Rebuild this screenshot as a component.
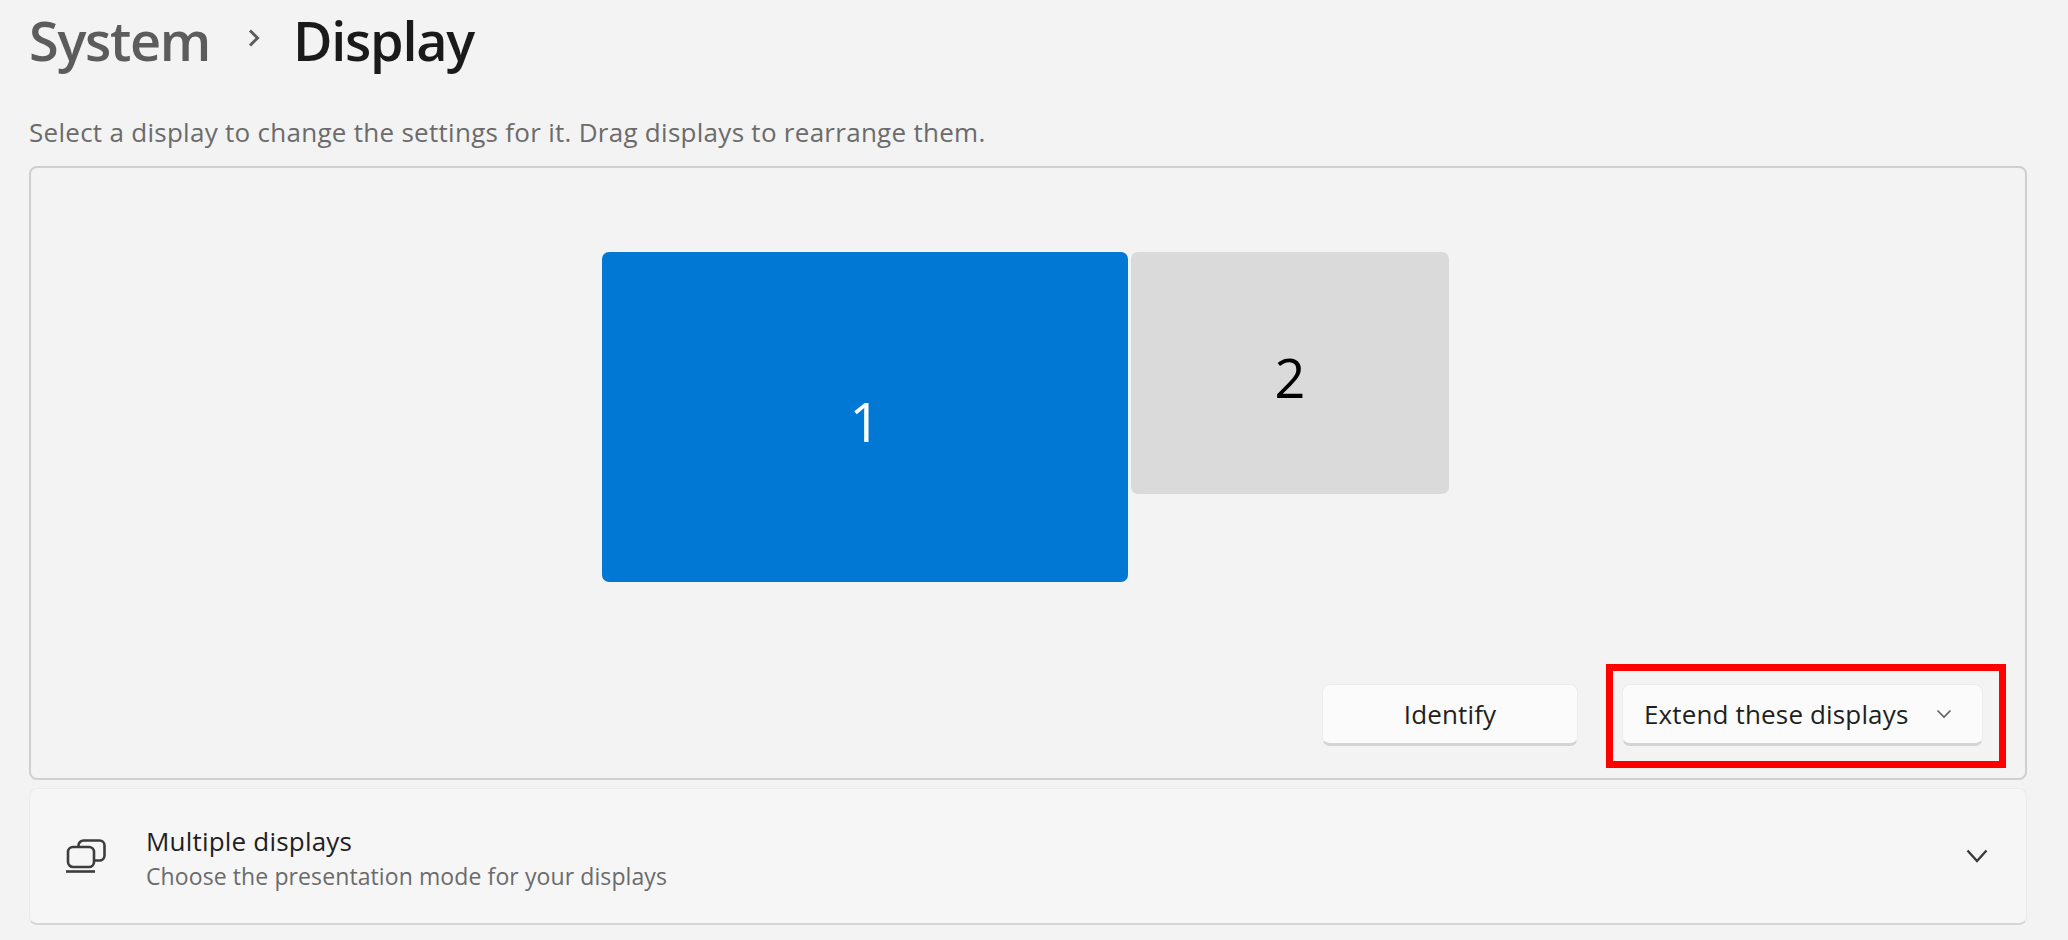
<div class="page">
  <header class="crumbs">
    <span class="parent">System</span>
    <svg class="sep" width="14" height="18" viewBox="0 0 14 18"><path d="M3 1.5 10.5 9 3 16.5" /></svg>
    <span class="current">Display</span>
  </header>
  <p class="hint">Select a display to change the settings for it. Drag displays to rearrange them.</p>
  <section class="panel">
    <div class="monitors">
      <div class="monitor primary">1</div>
      <div class="monitor secondary">2</div>
    </div>
    <div class="actions">
      <button class="btn identify">Identify</button>
      <div class="highlighted">
        <button class="btn mode">
          <span>Extend these displays</span>
          <svg width="16" height="10" viewBox="0 0 16 10"><path d="M1.5 1.5 8 8l6.5-6.5" /></svg>
        </button>
        <div class="frame"></div>
      </div>
    </div>
  </section>
  <section class="row">
    <svg class="icon" width="40" height="34" viewBox="0 0 40 34">
      <rect x="12.5" y="1.5" width="26" height="20" rx="5" />
      <rect x="2" y="8" width="26" height="20" rx="5" fill="#f6f6f6" />
      <path class="base" d="M0 32.5h29" />
    </svg>
    <div class="labels">
      <div class="title">Multiple displays</div>
      <div class="desc">Choose the presentation mode for your displays</div>
    </div>
    <svg class="expand" width="22" height="14" viewBox="0 0 22 14"><path d="M1.5 1.5 11 12l9.5-10.5" /></svg>
  </section>
</div>

<style>
  :global(body) {
    margin: 0;
    background: #f3f3f3;
  }
  .page {
    box-sizing: border-box;
    width: 2068px;
    height: 940px;
    padding: 0 41px 0 29px;
    font-family: "Open Sans", "Noto Sans", sans-serif;
    overflow: hidden;
  }
  .crumbs {
    display: flex;
    align-items: center;
    height: 80px;
    font-size: 54px;
    line-height: 80px;
    letter-spacing: -1.3px;
    font-weight: 600;
  }
  .parent { color: #5c5c5c; }
  .current { color: #1a1a1a; }
  .sep {
    margin: 0 32px 4px 37px;
    fill: none;
    stroke: #5c5c5c;
    stroke-width: 3;
  }
  .hint {
    margin: 37px 0 0;
    height: 49px;
    line-height: 30px;
    font-size: 26px;
    letter-spacing: 0.28px;
    color: #6b6b6b;
  }
  .panel {
    box-sizing: border-box;
    height: 614px;
    display: flex;
    flex-direction: column;
    background: #f3f3f3;
    border: 2px solid #cfcfcf;
    border-radius: 8px;
    padding: 84px 42px 32px 0;
  }
  .monitors {
    display: flex;
    gap: 3px;
    align-items: flex-start;
    margin-left: 571px;
  }
  .monitor {
    display: flex;
    align-items: center;
    justify-content: center;
    border-radius: 7px;
    font-size: 54px;
    box-sizing: border-box;
    padding-top: 8px;
  }
  .primary {
    width: 526px;
    height: 330px;
    background: #0078d4;
    color: #fff;
  }
  .secondary {
    width: 318px;
    height: 242px;
    background: #dadada;
    color: #000;
  }
  .actions {
    margin-top: auto;
    display: flex;
    justify-content: flex-end;
    gap: 44px;
  }
  .btn {
    box-sizing: border-box;
    height: 62px;
    display: flex;
    align-items: center;
    background: #fbfbfb;
    border: 1px solid #ececec;
    border-bottom: 3px solid #d4d4d4;
    border-radius: 8px;
    font: inherit;
    font-weight: 400;
    font-size: 26px;
    letter-spacing: 0.15px;
    color: #1f1f1f;
    padding: 0;
  }
  .identify {
    width: 256px;
    justify-content: center;
  }
  .mode {
    width: 361px;
    padding: 0 30px 0 21px;
    justify-content: space-between;
  }
  .mode svg {
    fill: none;
    stroke: #606060;
    stroke-width: 1.6;
  }
  .highlighted {
    position: relative;
  }
  .frame {
    position: absolute;
    box-sizing: border-box;
    left: -16px;
    right: -23px;
    top: -20px;
    bottom: -22px;
    border: 7px solid #ff0000;
    pointer-events: none;
  }
  .row {
    box-sizing: border-box;
    margin-top: 8px;
    height: 137px;
    display: flex;
    align-items: center;
    background: #f6f6f6;
    border: 1px solid #ebebeb;
    border-bottom: 2px solid #d6d6d6;
    border-radius: 8px;
    padding: 0 38px 0 36px;
  }
  .icon {
    flex: none;
    fill: none;
    stroke: #3d3d3d;
    stroke-width: 2.6;
    margin-right: 40px;
  }
  .labels {
    flex: 1;
    display: flex;
    flex-direction: column;
    gap: 2px;
    padding-top: 3px;
  }
  .title {
    font-size: 26px;
    line-height: 34px;
    letter-spacing: 0.2px;
    color: #1f1f1f;
  }
  .desc {
    font-size: 23px;
    line-height: 32px;
    letter-spacing: 0.1px;
    color: #6b6b6b;
  }
  .expand {
    fill: none;
    stroke: #3a3a3a;
    stroke-width: 2.4;
  }
</style>
